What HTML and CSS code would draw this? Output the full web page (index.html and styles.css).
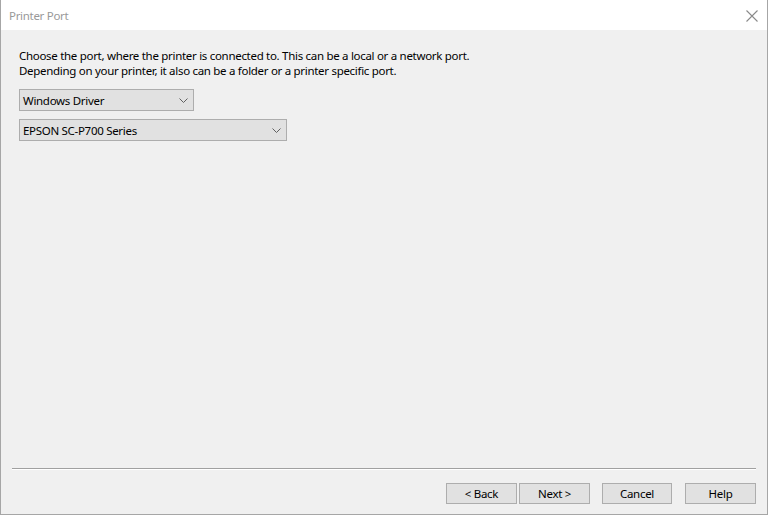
FILE: index.html
```html
<!DOCTYPE html>
<html>
<head>
<meta charset="utf-8">
<link rel="stylesheet" href="styles.css">
</head>
<body>
<div class="window">
  <div class="titlebar">
    <span class="title">Printer Port</span>
    <svg class="close" width="12" height="12" viewBox="0 0 12 12"><path d="M0.5 0.5L11.5 11.5M11.5 0.5L0.5 11.5" stroke="#8a8a8a" stroke-width="1.1" fill="none"/></svg>
  </div>
  <div class="content">
    <p class="desc">Choose the port, where the printer is connected to. This can be a local or a network port.<br>Depending on your printer, it also can be a folder or a printer specific port.</p>
    <div class="select sel1"><span>Windows Driver</span><svg width="9" height="5" viewBox="0 0 9 5"><path d="M0.5 0.5L4.5 4.5L8.5 0.5" stroke="#606060" fill="none"/></svg></div>
    <div class="select sel2"><span>EPSON SC-P700 Series</span><svg width="9" height="5" viewBox="0 0 9 5"><path d="M0.5 0.5L4.5 4.5L8.5 0.5" stroke="#606060" fill="none"/></svg></div>
  </div>
  <div class="footer">
    <div class="sep"></div>
    <div class="buttons">
      <div class="btn">&lt; Back</div>
      <div class="btn next">Next &gt;</div>
      <div class="btn cancel">Cancel</div>
      <div class="btn help">Help</div>
    </div>
  </div>
</div>
</body>
</html>
```
FILE: styles.css
```css
html, body { margin: 0; padding: 0; }
body { width: 768px; height: 515px; overflow: hidden; font-family: "Noto Sans", "Open Sans", sans-serif; font-size: 11.5px; letter-spacing: -0.3px; color: #000; }
.window { box-sizing: border-box; width: 768px; height: 515px; border: 1px solid #a6a6a6; border-top: none; background: #f0f0f0; display: flex; flex-direction: column; }
.titlebar { height: 30px; background: #fff; display: flex; align-items: center; justify-content: space-between; padding: 0 9px 0 8px; flex: none; }
.title { color: #999; }
.close { margin-top: 1px; }
.content { flex: 1; padding: 18px 18px 0; }
.desc { margin: 0; line-height: 15px; }
.select { box-sizing: border-box; height: 22px; background: #e1e1e1; border: 1px solid #adadad; display: flex; align-items: center; justify-content: space-between; padding: 0 4px 0 3px; }
.select svg { margin-right: 1px; }
.sel1 { width: 175px; margin-top: 11px; }
.sel2 { width: 268px; margin-top: 8px; }
.footer { flex: none; padding: 0 11px 10px 11px; }
.sep { height: 0; border-top: 1px solid #a0a0a0; border-bottom: 1px solid #fff; }
.buttons { display: flex; justify-content: flex-end; margin-top: 13px; }
.btn { box-sizing: border-box; width: 71px; height: 21px; background: #e1e1e1; border: 1px solid #adadad; display: flex; align-items: center; justify-content: center; }
.next { margin-left: 2px; }
.cancel { margin-left: 12px; width: 70px; }
.help { margin-left: 13px; }
```
